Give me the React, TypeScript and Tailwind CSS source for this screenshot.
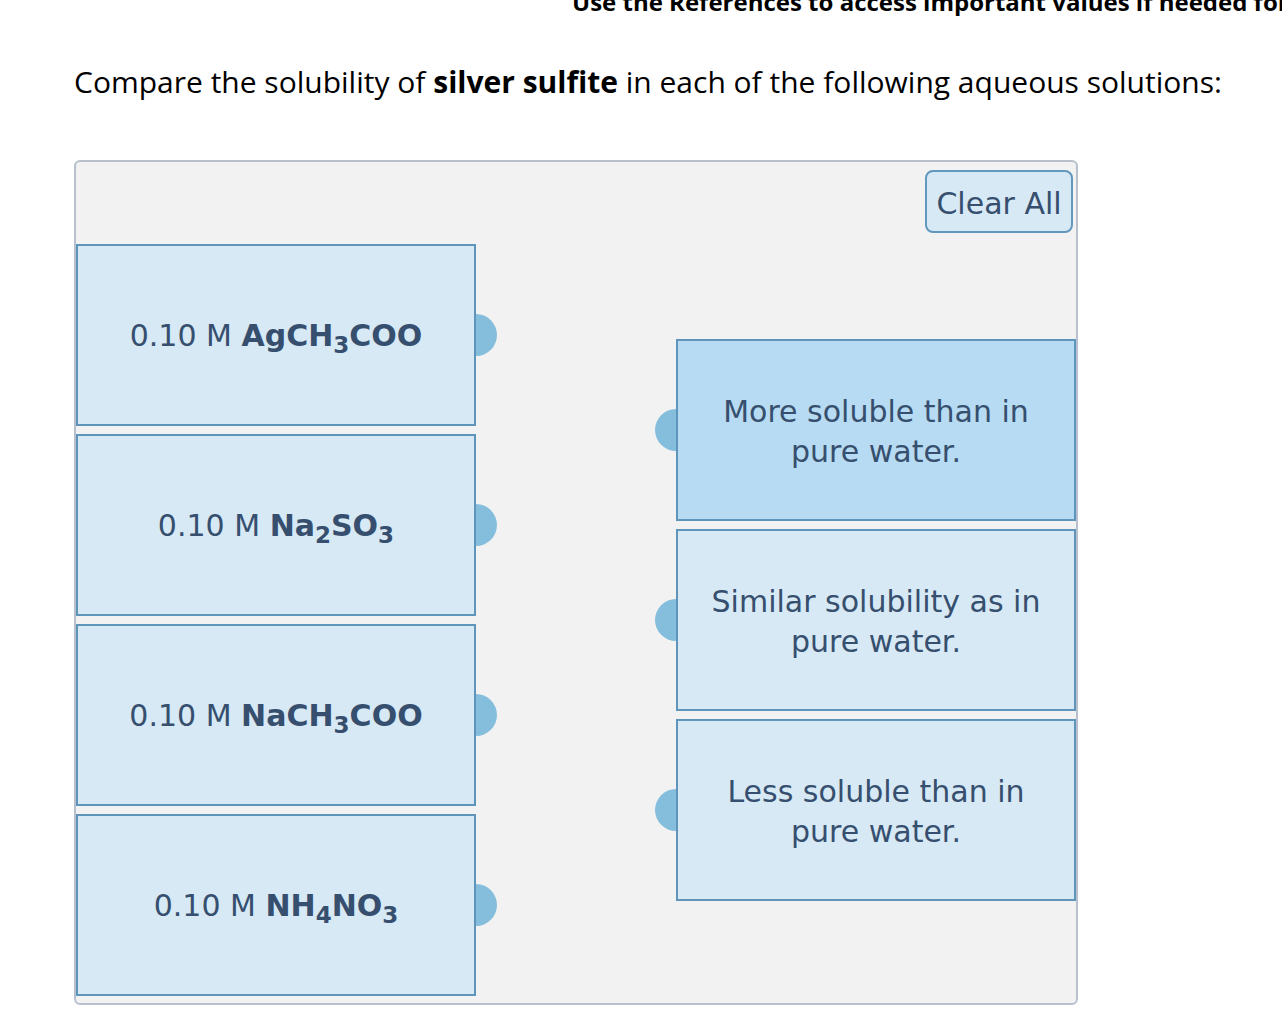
import React from "react";

const Sub = ({ children }: { children: React.ReactNode }) => (
  <span className="relative top-[7px] text-[23px]">{children}</span>
);

const choices = [
  { id: "a", formula: <>AgCH<Sub>3</Sub>COO</> },
  { id: "b", formula: <>Na<Sub>2</Sub>SO<Sub>3</Sub></> },
  { id: "c", formula: <>NaCH<Sub>3</Sub>COO</> },
  { id: "d", formula: <>NH<Sub>4</Sub>NO<Sub>3</Sub></> },
];

const targets = [
  { id: "more", lines: ["More soluble than in", "pure water."], active: true },
  { id: "same", lines: ["Similar solubility as in", "pure water."], active: false },
  { id: "less", lines: ["Less soluble than in", "pure water."], active: false },
];

export default function App() {
  return (
    <div className="min-h-screen bg-white overflow-hidden" style={{ fontFamily: "'Open Sans', sans-serif" }}>
      {/* header line, scrolled partly out of view */}
      <div className="h-[16px] overflow-hidden">
        <p className="ml-[572px] -mt-[14px] whitespace-nowrap text-[24px] font-bold text-black leading-[32px]">
          Use the References to access important values if needed for this question.
        </p>
      </div>

      <div className="pl-[74px]">
        <p className="mt-[46px] text-[30px] leading-[40px] text-black whitespace-nowrap">
          Compare the solubility of <b>silver sulfite</b> in each of the following aqueous solutions:
        </p>

        <div
          className="mt-[58px] w-[1004px] h-[845px] border-2 border-[#b7c0cc] rounded-md bg-[#f2f2f2] flex flex-col"
          style={{ fontFamily: "'DejaVu Sans', Verdana, sans-serif" }}
        >
          <div className="flex justify-end pt-2 pr-[3px]">
            <button className="w-[148px] h-[63px] pt-[3px] border-2 border-[#6398be] rounded-lg bg-[#d6e9f5] text-[30px] text-[#374f6e]">
              Clear All
            </button>
          </div>

          <div className="flex justify-between items-start mt-[11px]">
            <div className="flex flex-col gap-2">
              {choices.map((c) => (
                <div key={c.id} className="relative">
                  <div className="absolute right-[-21px] top-1/2 -translate-y-1/2 w-[42px] h-[42px] rounded-full bg-[#85bedd]" />
                  <div className="relative z-10 w-[400px] h-[182px] border-2 border-[#5f95bb] bg-[#d6e9f5] flex items-center justify-center text-[30px] text-[#374f6e]">
                    <span>
                      0.10 M <b>{c.formula}</b>
                    </span>
                  </div>
                </div>
              ))}
            </div>

            <div className="flex flex-col gap-2 mt-[95px]">
              {targets.map((t) => (
                <div key={t.id} className="relative">
                  <div className="absolute left-[-21px] top-1/2 -translate-y-1/2 w-[42px] h-[42px] rounded-full bg-[#85bedd]" />
                  <div
                    className={`relative z-10 w-[400px] h-[182px] pt-[3px] border-2 border-[#5f95bb] flex flex-col items-center justify-center text-[30px] leading-[40px] text-[#374f6e] ${
                      t.active ? "bg-[#b6dbf2]" : "bg-[#d6e9f5]"
                    }`}
                  >
                    {t.lines.map((l) => (
                      <span key={l}>{l}</span>
                    ))}
                  </div>
                </div>
              ))}
            </div>
          </div>
        </div>
      </div>
    </div>
  );
}
